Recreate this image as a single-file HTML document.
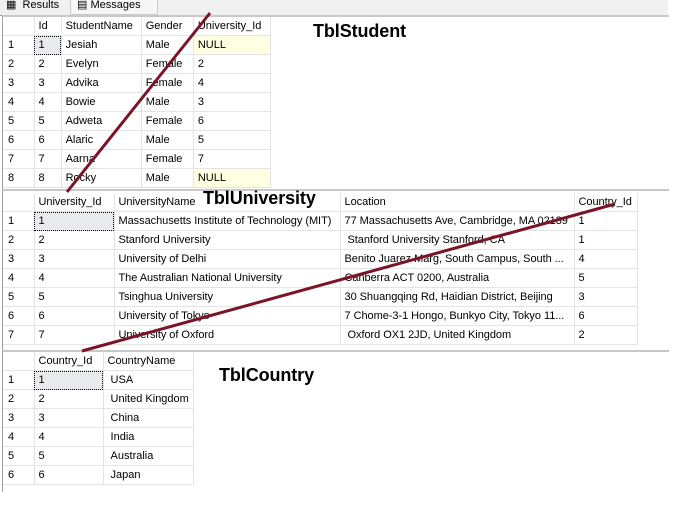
<!DOCTYPE html>
<html><head><style>
body{margin:0;width:680px;height:507px;background:#fff;position:relative;overflow:hidden;font-family:"Liberation Sans",Arial,sans-serif;font-size:11px;color:#000}
.top{position:absolute;left:0;top:0;width:668px;height:15px;background:#f0f0f0;border-bottom:1px solid #a0a0a0}
.tab{position:absolute;top:0;height:14px;line-height:11px;font-size:11px}
.panel{position:absolute;left:2px;width:666px;background:#fff;border-left:1px solid #a0a0a0;border-top:2px solid #c8c8c8}
table{border-collapse:collapse;table-layout:fixed;position:absolute;left:0;top:0}
td{height:18px;padding:0 0 0 4px;border-right:1px solid #e4e4e4;border-bottom:1px solid #e4e4e4;white-space:nowrap;overflow:hidden;line-height:18px}
tr.h td{height:17px;background:#fff}
td.n{padding-left:5px}
.null{background:#ffffe1}
.sel{outline:1px dotted #000;outline-offset:-1px;background:#e8eaee}
.u td{letter-spacing:-0.05px}
.lbl{position:absolute;font-weight:bold;font-size:18px;font-family:"Liberation Sans",sans-serif;letter-spacing:-0.1px}
svg{position:absolute;left:0;top:0}
</style></head><body>
<div class="top"></div>
<div class="tab" style="left:6px;">▦&nbsp; Results</div>
<div class="tab" style="left:70px;width:80px;background:#f7f7f7;border:1px solid #ccc;border-top:none;padding-left:6px">▤ Messages</div>

<div class="panel" style="top:15px;height:172px">
<table style="width:268px">
<col style="width:31px"><col style="width:27px"><col style="width:80px"><col style="width:52px"><col style="width:77px">
<tr class="h"><td></td><td>Id</td><td>StudentName</td><td>Gender</td><td>University_Id</td></tr>
<tr><td class="n">1</td><td class="sel">1</td><td>Jesiah</td><td>Male</td><td class="null">NULL</td></tr>
<tr><td class="n">2</td><td>2</td><td>Evelyn</td><td>Female</td><td>2</td></tr>
<tr><td class="n">3</td><td>3</td><td>Advika</td><td>Female</td><td>4</td></tr>
<tr><td class="n">4</td><td>4</td><td>Bowie</td><td>Male</td><td>3</td></tr>
<tr><td class="n">5</td><td>5</td><td>Adweta</td><td>Female</td><td>6</td></tr>
<tr><td class="n">6</td><td>6</td><td>Alaric</td><td>Male</td><td>5</td></tr>
<tr><td class="n">7</td><td>7</td><td>Aarna</td><td>Female</td><td>7</td></tr>
<tr><td class="n">8</td><td>8</td><td>Rocky</td><td>Male</td><td class="null">NULL</td></tr>
</table></div>

<div class="panel u" style="top:189px;height:159px">
<table style="width:634px;top:2px">
<col style="width:31px"><col style="width:80px"><col style="width:226px"><col style="width:234px"><col style="width:63px">
<tr class="h"><td></td><td>University_Id</td><td>UniversityName</td><td>Location</td><td>Country_Id</td></tr>
<tr><td class="n">1</td><td class="sel">1</td><td>Massachusetts Institute of Technology (MIT)</td><td>77 Massachusetts Ave, Cambridge, MA 02139</td><td>1</td></tr>
<tr><td class="n">2</td><td>2</td><td>Stanford University</td><td>&nbsp;Stanford University Stanford, CA</td><td>1</td></tr>
<tr><td class="n">3</td><td>3</td><td>University of Delhi</td><td>Benito Juarez Marg, South Campus, South ...</td><td>4</td></tr>
<tr><td class="n">4</td><td>4</td><td>The Australian National University</td><td>Canberra ACT 0200, Australia</td><td>5</td></tr>
<tr><td class="n">5</td><td>5</td><td>Tsinghua University</td><td>30 Shuangqing Rd, Haidian District, Beijing</td><td>3</td></tr>
<tr><td class="n">6</td><td>6</td><td>University of Tokyo</td><td>7 Chome-3-1 Hongo, Bunkyo City, Tokyo 11...</td><td>6</td></tr>
<tr><td class="n">7</td><td>7</td><td>University of Oxford</td><td>&nbsp;Oxford OX1 2JD, United Kingdom</td><td>2</td></tr>
</table></div>

<div class="panel" style="top:350px;height:140px">
<table style="width:190px">
<col style="width:31px"><col style="width:69px"><col style="width:90px">
<tr class="h"><td></td><td>Country_Id</td><td>CountryName</td></tr>
<tr><td class="n">1</td><td class="sel">1</td><td>&nbsp;USA</td></tr>
<tr><td class="n">2</td><td>2</td><td>&nbsp;United Kingdom</td></tr>
<tr><td class="n">3</td><td>3</td><td>&nbsp;China</td></tr>
<tr><td class="n">4</td><td>4</td><td>&nbsp;India</td></tr>
<tr><td class="n">5</td><td>5</td><td>&nbsp;Australia</td></tr>
<tr><td class="n">6</td><td>6</td><td>&nbsp;Japan</td></tr>
</table></div>

<div class="lbl" style="left:313px;top:21px">TblStudent</div>
<div class="lbl" style="left:203px;top:188px">TblUniversity</div>
<div class="lbl" style="left:219px;top:365px">TblCountry</div>

<svg width="680" height="507">
<line x1="210" y1="13" x2="67" y2="192" stroke="#7a1428" stroke-width="3"/>
<line x1="615" y1="204" x2="82" y2="351" stroke="#7a1428" stroke-width="3"/>
</svg>
</body></html>
